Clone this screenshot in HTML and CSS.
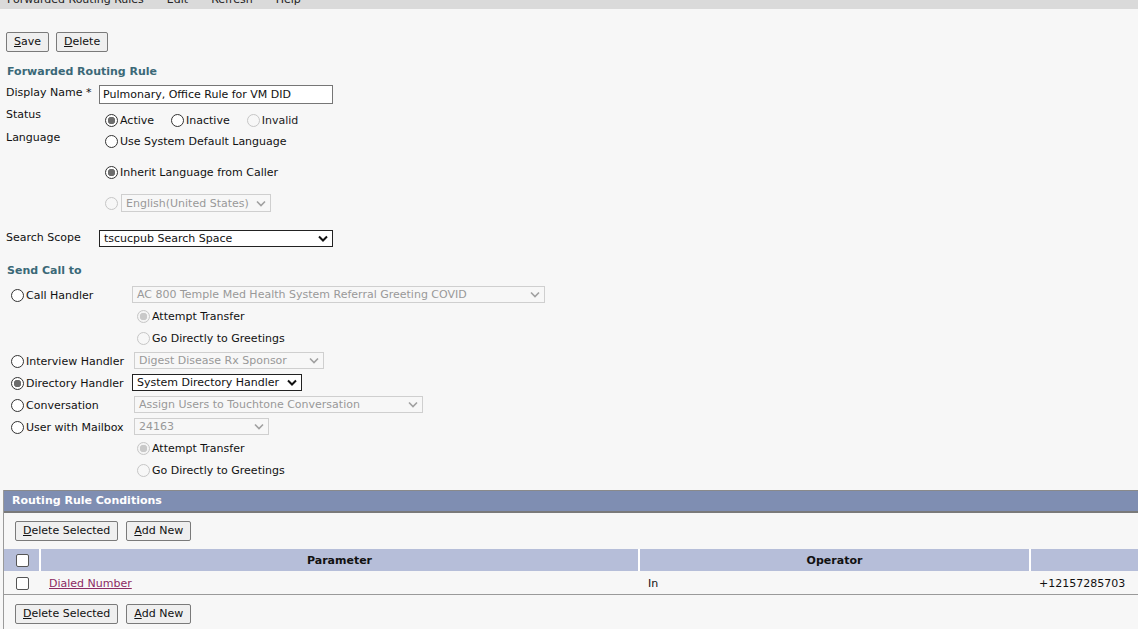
FILE: index.html
```html
<!DOCTYPE html>
<html>
<head>
<meta charset="utf-8">
<title>Forwarded Routing Rule</title>
<link rel="stylesheet" href="styles.css">
</head>
<body>
<div class="menubar">
  <div class="menu-inner">
    <span>Forwarded Routing Rules</span><span>Edit</span><span>Refresh</span><span>Help</span>
  </div>
</div>

<div class="toolbar">
  <button class="btn"><u>S</u>ave</button>
  <button class="btn"><u>D</u>elete</button>
</div>

<h2 class="sect-title">Forwarded Routing Rule</h2>

<div class="row row-display">
  <div class="label">Display Name <span class="req">*</span></div>
  <div class="textbox">Pulmonary, Office Rule for VM DID</div>
</div>

<div class="row row-status">
  <div class="label">Status</div>
  <div class="opts-inline">
    <span class="opt"><span class="radio checked"></span>Active</span>
    <span class="opt"><span class="radio"></span>Inactive</span>
    <span class="opt dim"><span class="radio disabled"></span>Invalid</span>
  </div>
</div>

<div class="row row-lang">
  <div class="label">Language</div>
  <div class="opts-stack">
    <div class="opt"><span class="radio"></span>Use System Default Language</div>
    <div class="opt"><span class="radio checked"></span>Inherit Language from Caller</div>
    <div class="opt"><span class="radio disabled"></span>
      <div class="sel dis sel-lang"><span>English(United States)</span><svg viewBox="0 0 10 6" class="chev"><path d="M1 1l4 4 4-4"/></svg></div>
    </div>
  </div>
</div>

<div class="row row-scope">
  <div class="label">Search Scope</div>
  <div class="sel en sel-scope"><span>tscucpub Search Space</span><svg viewBox="0 0 10 6" class="chev"><path d="M1 1l4 4 4-4"/></svg></div>
</div>

<h2 class="sect-title send">Send Call to</h2>

<div class="callto">
  <div class="crow">
    <div class="clabel"><span class="radio"></span>Call Handler</div>
    <div class="sel dis sel-ch"><span>AC 800 Temple Med Health System Referral Greeting COVID</span><svg viewBox="0 0 10 6" class="chev"><path d="M1 1l4 4 4-4"/></svg></div>
  </div>
  <div class="crow sub"><span class="radio disabled checked"></span>Attempt Transfer</div>
  <div class="crow sub"><span class="radio disabled"></span>Go Directly to Greetings</div>
  <div class="crow">
    <div class="clabel"><span class="radio"></span>Interview Handler</div>
    <div class="sel dis off sel-ih"><span>Digest Disease Rx Sponsor</span><svg viewBox="0 0 10 6" class="chev"><path d="M1 1l4 4 4-4"/></svg></div>
  </div>
  <div class="crow">
    <div class="clabel"><span class="radio checked"></span>Directory Handler</div>
    <div class="sel en sel-dh"><span>System Directory Handler</span><svg viewBox="0 0 10 6" class="chev"><path d="M1 1l4 4 4-4"/></svg></div>
  </div>
  <div class="crow">
    <div class="clabel"><span class="radio"></span>Conversation</div>
    <div class="sel dis off sel-cv"><span>Assign Users to Touchtone Conversation</span><svg viewBox="0 0 10 6" class="chev"><path d="M1 1l4 4 4-4"/></svg></div>
  </div>
  <div class="crow">
    <div class="clabel"><span class="radio"></span>User with Mailbox</div>
    <div class="sel dis off sel-um"><span>24163</span><svg viewBox="0 0 10 6" class="chev"><path d="M1 1l4 4 4-4"/></svg></div>
  </div>
  <div class="crow sub"><span class="radio disabled checked"></span>Attempt Transfer</div>
  <div class="crow sub"><span class="radio disabled"></span>Go Directly to Greetings</div>
</div>

<div class="panel">
  <div class="panel-head">Routing Rule Conditions</div>
  <div class="panel-btns">
    <button class="btn"><u>D</u>elete Selected</button>
    <button class="btn"><u>A</u>dd New</button>
  </div>
  <div class="tbl">
    <div class="tr th">
      <div class="c c0"><span class="chk"></span></div>
      <div class="c c1">Parameter</div>
      <div class="c c2">Operator</div>
      <div class="c c3"></div>
    </div>
    <div class="tr td">
      <div class="c c0"><span class="chk"></span></div>
      <div class="c c1"><a href="#" class="lnk">Dialed Number</a></div>
      <div class="c c2">In</div>
      <div class="c c3">+12157285703</div>
    </div>
  </div>
  <div class="panel-btns bottom">
    <button class="btn"><u>D</u>elete Selected</button>
    <button class="btn"><u>A</u>dd New</button>
  </div>
</div>
</body>
</html>
```

FILE: styles.css
```css
* { box-sizing: border-box; }
html, body { margin: 0; padding: 0; }
body {
  background: #f7f7f7;
  font-family: "DejaVu Sans", Verdana, sans-serif;
  font-size: 11px;
  color: #111;
  width: 1138px;
  height: 629px;
  overflow: hidden;
}

.menubar {
  height: 9px;
  background: #dadada;
  overflow: hidden;
}
.menu-inner {
  display: flex;
  gap: 23px;
  padding-left: 7px;
  margin-top: -7px;
  font-size: 11px;
  line-height: 14px;
  color: #222;
}

.toolbar {
  display: flex;
  gap: 7px;
  padding: 23px 0 0 6px;
}
.btn {
  font-family: inherit;
  font-size: 11px;
  height: 20px;
  padding: 0 7px;
  background: #efefef;
  border: 1px solid #7a7a7a;
  border-radius: 2px;
  color: #111;
  line-height: 16px;
}
.btn u { text-decoration: underline; }

.sect-title {
  margin: 13px 0 0 7px;
  font-size: 11px;
  line-height: 13px;
  font-weight: bold;
  color: #3b6977;
}
.sect-title.send { margin-top: 17px; }

.row { display: flex; padding-left: 6px; }
.label { width: 93px; line-height: 13px; }
.req { color: #111; }

.row-display { margin-top: 7px; height: 18px; }
.row-display .label { padding-top: 1px; }
.textbox {
  width: 234px;
  height: 19px;
  background: #fff;
  border: 1px solid #767676;
  padding: 2px 3px;
  line-height: 13px;
  color: #111;
}

.row-status { margin-top: 5px; height: 20px; }
.opts-inline { display: flex; padding-top: 5px; padding-left: 6px; }
.opts-inline .opt { display: flex; align-items: center; line-height: 13px; }
.opts-inline .opt + .opt { margin-left: 17px; }

.radio {
  display: inline-block;
  width: 13px;
  height: 13px;
  border: 1px solid #333;
  border-radius: 50%;
  background: #fff;
  margin-right: 2px;
  flex: none;
}
.radio.checked {
  background: radial-gradient(circle, #6d6d6d 0 3.5px, #fff 4px);
}
.radio.disabled {
  border-color: #c6c6c6;
  background: #f7f7f7;
}
.radio.disabled.checked {
  background: radial-gradient(circle, #c9c9c9 0 3.5px, #f4f4f4 4px);
}
.dim { color: #222; }

.row-lang { margin-top: 3px; }
.opts-stack { display: flex; flex-direction: column; gap: 13px; padding-left: 6px; padding-top: 1px; }
.opts-stack .opt { display: flex; align-items: center; height: 18px; line-height: 13px; }

.sel {
  display: flex;
  align-items: center;
  justify-content: space-between;
  height: 17px;
  padding: 0 4px 0 4px;
  line-height: 13px;
  white-space: nowrap;
  overflow: hidden;
}
.sel.en { background: #fff; border: 1px solid #222; color: #111; }
.sel.dis { background: #f7f7f7; border: 1px solid #cfcfcf; color: #999; }
.chev { width: 10px; height: 7px; flex: none; }
.chev path { fill: none; stroke-width: 1.6; }
.sel.en .chev path { stroke: #111; stroke-width: 2; }
.sel.dis .chev path { stroke: #a0a0a0; }

.sel-lang { width: 150px; margin-left: 1px; height: 18px; }
.sel-scope { width: 234px; }

.row-scope { margin-top: 18px; height: 17px; }
.row-scope .label { padding-top: 1px; }

.callto { margin-top: 6px; }
.crow { display: flex; align-items: center; height: 22px; padding-left: 11px; line-height: 13px; }
.clabel { display: flex; align-items: center; width: 121px; padding-top: 2px; }
.crow.sub { padding-left: 137px; }
.sel-ch { width: 413px; height: 17px; }
.sel.off { margin-left: 2px; }
.sel-ih { width: 190px; }
.sel-dh { width: 170px; }
.sel-cv { width: 289px; }
.sel-um { width: 135px; }

.panel {
  margin: 9px 0 0 3px;
  border-left: 1px solid #9a9a9a;
  padding-bottom: 10px;
}
.panel-head {
  height: 23px;
  background: #7f8eb2;
  border-top: 1px solid #8a8a8a;
  border-bottom: 2px solid #7a7a7a;
  color: #fff;
  font-weight: bold;
  line-height: 19px;
  padding-left: 8px;
}
.panel-btns { display: flex; gap: 8px; padding: 8px 0 0 11px; }
.panel-btns.bottom { padding-top: 9px; }

.tbl { margin-top: 8px; border-bottom: 1px solid #9a9a9a; }
.tr { display: flex; height: 22px; align-items: center; }
.td { margin-top: 1px; }
.th { background: #b6bed9; font-weight: bold; }
.c { height: 22px; display: flex; align-items: center; line-height: 13px; white-space: nowrap; }
.th .c + .c { border-left: 2px solid #fff; }
.td .c + .c { border-left: 2px solid transparent; }
.c0 { width: 35px; justify-content: center; }
.c1 { width: 599px; padding-left: 8px; }
.th .c1, .th .c2 { justify-content: center; padding-left: 0; }
.c2 { width: 391px; padding-left: 8px; }
.c3 { width: 107px; padding-left: 8px; }
.chk {
  display: inline-block;
  width: 13px;
  height: 13px;
  border: 1px solid #555;
  border-radius: 2px;
  background: #fff;
  margin-left: 2px;
}
.lnk { color: #8c2a63; text-decoration: underline; }
```
